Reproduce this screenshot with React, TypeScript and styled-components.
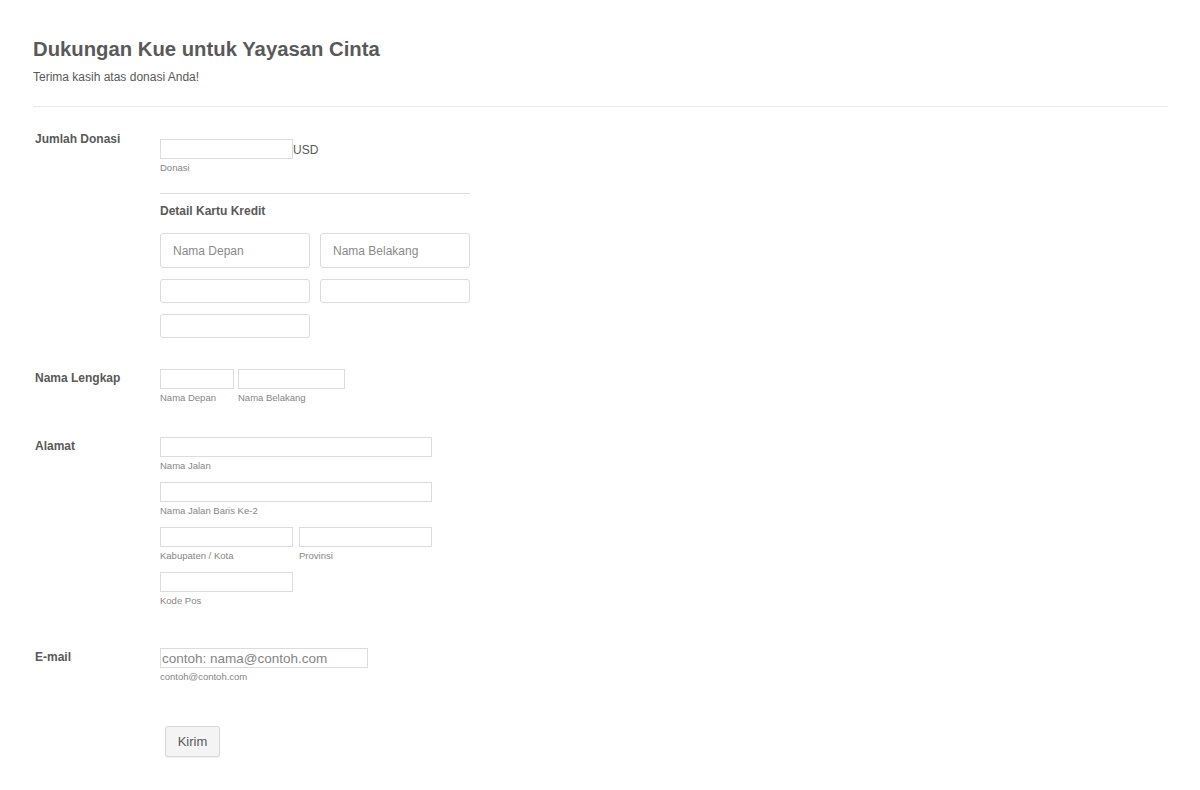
import { FC } from 'react';
import styled, { createGlobalStyle } from 'styled-components';

const GlobalStyle = createGlobalStyle`
	body {
		margin: 0;
		background: #fff;
		font-family: 'Liberation Sans', Arial, sans-serif;
		color: #555;
	}
	* {
		box-sizing: border-box;
	}
`;

const App: FC = () => {
	return (
		<Page>
			<GlobalStyle />
			<Header>
				<Title>Dukungan Kue untuk Yayasan Cinta</Title>
				<Subtitle>Terima kasih atas donasi Anda!</Subtitle>
			</Header>

			<Row $top={25}>
				<Label $offset={0}>Jumlah Donasi</Label>
				<Field $offset={7}>
					<Inline>
						<TextInput $w={133} />
						<Currency>USD</Currency>
					</Inline>
					<SubLabel>Donasi</SubLabel>
					<Separator />
					<SectionTitle>Detail Kartu Kredit</SectionTitle>
					<CardGrid>
						<CardInput $h={35} placeholder="Nama Depan" />
						<CardInput $h={35} placeholder="Nama Belakang" />
						<CardInput $h={24} />
						<CardInput $h={24} />
						<CardInput $h={24} />
					</CardGrid>
				</Field>
			</Row>

			<Row $top={31}>
				<Label $offset={2}>Nama Lengkap</Label>
				<Field $offset={0}>
					<Inline $gap={4}>
						<SubField>
							<TextInput $w={74} />
							<SubLabel>Nama Depan</SubLabel>
						</SubField>
						<SubField>
							<TextInput $w={107} />
							<SubLabel>Nama Belakang</SubLabel>
						</SubField>
					</Inline>
				</Field>
			</Row>

			<Row $top={34}>
				<Label $offset={2}>Alamat</Label>
				<Field $offset={0}>
					<AddressBlock>
						<TextInput $w={272} />
						<SubLabel>Nama Jalan</SubLabel>
					</AddressBlock>
					<AddressBlock>
						<TextInput $w={272} />
						<SubLabel>Nama Jalan Baris Ke-2</SubLabel>
					</AddressBlock>
					<AddressBlock>
						<Inline $gap={6}>
							<SubField>
								<TextInput $w={133} />
								<SubLabel>Kabupaten / Kota</SubLabel>
							</SubField>
							<SubField>
								<TextInput $w={133} />
								<SubLabel>Provinsi</SubLabel>
							</SubField>
						</Inline>
					</AddressBlock>
					<SubField>
						<TextInput $w={133} />
						<SubLabel>Kode Pos</SubLabel>
					</SubField>
				</Field>
			</Row>

			<Row $top={42}>
				<Label $offset={2}>E-mail</Label>
				<Field $offset={0}>
					<EmailInput placeholder="contoh: nama@contoh.com" />
					<SubLabel>contoh@contoh.com</SubLabel>
				</Field>
			</Row>

			<Row $top={44}>
				<Label $offset={0} />
				<Field $offset={0}>
					<SubmitButton>Kirim</SubmitButton>
				</Field>
			</Row>
		</Page>
	);
};

const Page = styled.div`
	padding: 38px 32px 40px 33px;
	width: 1200px;
`;

const Header = styled.div`
	border-bottom: 1px solid #e8e8e8;
	padding-bottom: 22px;
`;

const Title = styled.h1`
	margin: 0;
	font-size: 20.3px;
	line-height: 23px;
	font-weight: 700;
	color: #595959;
`;

const Subtitle = styled.div`
	margin-top: 9px;
	font-size: 12px;
	line-height: 14px;
	color: #595959;
`;

const Row = styled.div<{ $top: number }>`
	display: flex;
	align-items: flex-start;
	margin-top: ${(p) => p.$top}px;
`;

const Label = styled.div<{ $offset: number }>`
	width: 127px;
	padding-left: 2px;
	margin-top: ${(p) => p.$offset}px;
	font-size: 12px;
	line-height: 14px;
	font-weight: 700;
	color: #595959;
`;

const Field = styled.div<{ $offset: number }>`
	display: flex;
	flex-direction: column;
	align-items: flex-start;
	margin-top: ${(p) => p.$offset}px;
`;

const Inline = styled.div<{ $gap?: number }>`
	display: flex;
	align-items: center;
	gap: ${(p) => p.$gap ?? 0}px;
`;

const SubField = styled.div`
	display: flex;
	flex-direction: column;
	align-items: flex-start;
`;

const AddressBlock = styled.div`
	margin-bottom: 11px;
`;

const TextInput = styled.input<{ $w: number }>`
	display: block;
	width: ${(p) => p.$w}px;
	height: 20px;
	margin: 0;
	padding: 0 2px;
	border: 1px solid #dcdcdc;
	border-radius: 0;
	background: #fff;
	outline: none;
`;

const Currency = styled.span`
	font-size: 12px;
	color: #595959;
	padding-top: 2px;
`;

const SubLabel = styled.div`
	margin-top: 3px;
	font-size: 9.5px;
	line-height: 11px;
	color: #858585;
	white-space: nowrap;
`;

const Separator = styled.div`
	width: 310px;
	height: 1px;
	margin-top: 20px;
	background: #dedede;
`;

const SectionTitle = styled.div`
	margin-top: 10px;
	font-size: 12px;
	line-height: 14px;
	font-weight: 700;
	color: #595959;
`;

const CardGrid = styled.div`
	display: grid;
	grid-template-columns: 150px 150px;
	column-gap: 10px;
	row-gap: 11px;
	margin-top: 15px;
`;

const CardInput = styled.input<{ $h: number }>`
	display: block;
	width: 150px;
	height: ${(p) => p.$h}px;
	margin: 0;
	padding: 0 12px;
	border: 1px solid #dcdcdc;
	border-radius: 3px;
	background: #fff;
	font-family: 'Liberation Sans', Arial, sans-serif;
	font-size: 12px;
	color: #555;
	outline: none;
	&::placeholder {
		color: #8a8a8a;
	}
`;

const EmailInput = styled.input`
	display: block;
	width: 208px;
	height: 20px;
	margin: 0;
	padding: 0 1px;
	border: 1px solid #dcdcdc;
	background: #fff;
	font-family: 'Liberation Sans', Arial, sans-serif;
	font-size: 13.5px;
	color: #555;
	outline: none;
	&::placeholder {
		color: #858585;
	}
`;

const SubmitButton = styled.button`
	margin-left: 5px;
	width: 55px;
	height: 31px;
	padding: 0;
	border: 1px solid #d8d8d8;
	border-radius: 3px;
	background: #f4f4f4;
	box-shadow: 0 1px 1px rgba(0, 0, 0, 0.06);
	font-family: 'Liberation Sans', Arial, sans-serif;
	font-size: 13px;
	color: #595959;
	cursor: pointer;
`;

export default App;
